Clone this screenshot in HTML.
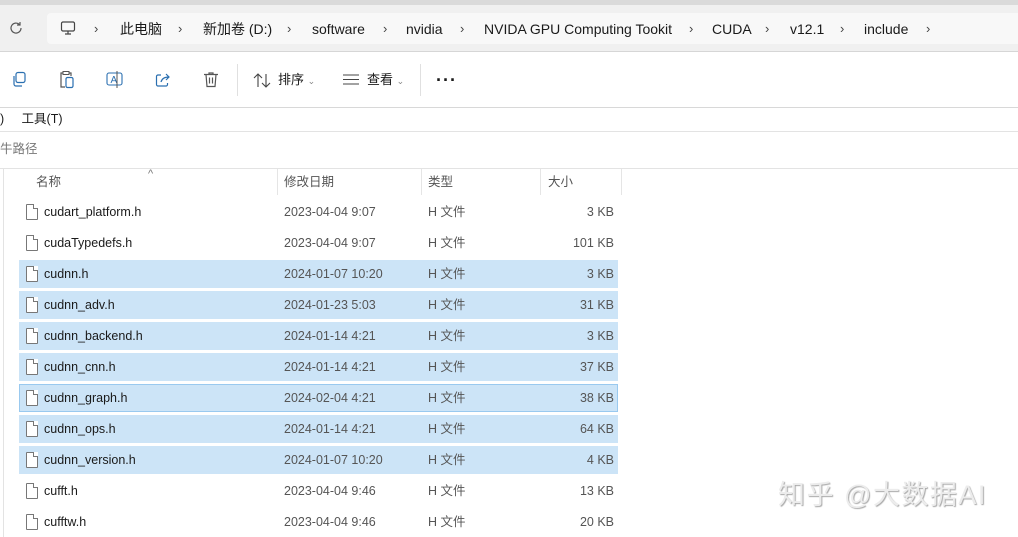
<!DOCTYPE html><html><head><meta charset="utf-8"><style>
*{margin:0;padding:0;box-sizing:border-box}
body{width:1018px;height:537px;overflow:hidden;background:#fff;font-family:"Liberation Sans","Noto Sans CJK SC",sans-serif;color:#1a1a1a;position:relative;font-size:13px;line-height:16px}
.a{position:absolute;white-space:nowrap;line-height:16px}
.top{position:absolute;left:0;top:0;width:1018px;height:52px;background:#f0f0f0;border-bottom:1px solid #d6d6d6}
.strip{position:absolute;left:0;top:0;width:1018px;height:5px;background:#dadada}
.addr{position:absolute;left:47px;top:13px;width:971px;height:31px;background:#f8f8f8;border-radius:4px 0 0 4px}
.bc{position:absolute;top:21px;font-size:14px;color:#1a1a1a;line-height:16px;white-space:nowrap}
.sep{color:#444;font-size:13px}
.line{position:absolute;left:0;width:1018px;height:1px;background:#d8d8d8}
.row{position:absolute;left:19px;width:599px;height:28px}
.sel{background:#cce4f7}
.row span{position:absolute;top:6px;font-size:12.5px;line-height:16px;height:16px;white-space:nowrap}
.fi{position:absolute;left:7px;top:6px;width:12px;height:16px;border:1px solid #777;border-radius:1px;background:#fff}
.fi:after{content:"";position:absolute;right:-1px;top:-1px;width:4px;height:4px;background:#fff;border-left:1px solid #777;border-bottom:1px solid #777}
.g{color:#555}
</style></head><body>
<div class="top"><div class="strip"></div><div class="addr"></div></div>
<svg class="a" style="left:9px;top:21px" width="14" height="14" viewBox="0 0 14 14"><path d="M12 7a5 5 0 1 1-1.5-3.5M11 1v3H8" fill="none" stroke="#555" stroke-width="1.2"/></svg>
<svg class="a" style="left:60px;top:20px" width="16" height="16" viewBox="0 0 16 16"><rect x="1.5" y="2" width="13" height="9" rx="1.5" fill="none" stroke="#444" stroke-width="1.2"/><path d="M5 14h6M8 11v3" stroke="#444" stroke-width="1.2"/></svg>
<div class="bc sep" style="left:94px">›</div>
<div class="bc" style="left:120px">此电脑</div>
<div class="bc sep" style="left:178px">›</div>
<div class="bc" style="left:203px">新加卷 (D:)</div>
<div class="bc sep" style="left:287px">›</div>
<div class="bc" style="left:312px">software</div>
<div class="bc sep" style="left:383px">›</div>
<div class="bc" style="left:406px">nvidia</div>
<div class="bc sep" style="left:460px">›</div>
<div class="bc" style="left:484px">NVIDA GPU Computing Tookit</div>
<div class="bc sep" style="left:689px">›</div>
<div class="bc" style="left:712px">CUDA</div>
<div class="bc sep" style="left:765px">›</div>
<div class="bc" style="left:790px">v12.1</div>
<div class="bc sep" style="left:840px">›</div>
<div class="bc" style="left:864px">include</div>
<div class="bc sep" style="left:926px">›</div>
<!-- toolbar -->
<svg class="a" style="left:11px;top:71px" width="16" height="17" viewBox="0 0 16 17"><rect x="5" y="1.5" width="9" height="10" rx="2" fill="none" stroke="#2a6fb0" stroke-width="1.2"/><path d="M3 5v8a2 2 0 0 0 2 2h6" fill="none" stroke="#2a6fb0" stroke-width="1.2"/></svg>
<svg class="a" style="left:59px;top:70px" width="16" height="19" viewBox="0 0 16 19"><path d="M4 3H2v14h4M10 3h2v3" fill="none" stroke="#555" stroke-width="1.2"/><rect x="4" y="1.5" width="6" height="3" fill="none" stroke="#555"/><rect x="7" y="7.5" width="7" height="10" rx="1.5" fill="none" stroke="#2a6fb0" stroke-width="1.2"/></svg>
<svg class="a" style="left:106px;top:71px" width="18" height="17" viewBox="0 0 18 17"><rect x="1" y="2" width="15" height="12" rx="2" fill="none" stroke="#2a6fb0" stroke-width="1.1"/><text x="4.5" y="12" font-size="10" fill="#2a6fb0" font-family="Liberation Sans">A</text><path d="M11 0v17" stroke="#555"/></svg>
<svg class="a" style="left:155px;top:72px" width="16" height="16" viewBox="0 0 16 16"><path d="M6 3H3a1.5 1.5 0 0 0-1.5 1.5v8A1.5 1.5 0 0 0 3 14h8a1.5 1.5 0 0 0 1.5-1.5V11M6 10c1-4 4-5 8-5M11 2l3 3-3 3" fill="none" stroke="#2a6fb0" stroke-width="1.2"/></svg>
<svg class="a" style="left:203px;top:71px" width="16" height="17" viewBox="0 0 16 17"><path d="M1 3.5h14M6 3.5V2h4v1.5M3 3.5l1 12h8l1-12M6.5 6.5v6M9.5 6.5v6" fill="none" stroke="#555" stroke-width="1.2"/></svg>
<div class="a" style="left:237px;top:64px;width:1px;height:32px;background:#e0e0e0"></div>
<svg class="a" style="left:253px;top:73px" width="18" height="15" viewBox="0 0 18 15"><path d="M5 14V1M1 5l4-4 4 4M13 1v13M9 10l4 4 4-4" fill="none" stroke="#444" stroke-width="1.1"/></svg>
<div class="a" style="left:278px;top:72px;font-size:13px">排序 <span style="font-size:9px;color:#888">⌄</span></div>
<svg class="a" style="left:343px;top:74px" width="16" height="11" viewBox="0 0 16 11"><path d="M0 1h16M0 5.5h16M0 10h16" stroke="#444" stroke-width="1.1"/></svg>
<div class="a" style="left:367px;top:72px;font-size:13px">查看 <span style="font-size:9px;color:#888">⌄</span></div>
<div class="a" style="left:420px;top:64px;width:1px;height:32px;background:#e0e0e0"></div>
<div class="a" style="left:436px;top:72px;font-size:18px;font-weight:bold;letter-spacing:1px;line-height:16px">···</div>
<div class="line" style="top:107px"></div>
<div class="a" style="left:0;top:111px;font-size:12.5px">)&nbsp;&nbsp;&nbsp;&nbsp;&nbsp;工具(T)</div>
<div class="line" style="top:131px;background:#e3e3e3"></div>
<div class="a" style="left:0;top:141px;font-size:12.5px;color:#777">牛路径</div>
<div class="line" style="top:168px;background:#e3e3e3"></div>
<div class="a" style="left:3px;top:169px;width:1px;height:368px;background:#e3e3e3"></div>
<!-- header -->
<div class="a" style="left:148px;top:166px;font-size:11px;color:#777">^</div>
<div class="a g" style="left:36px;top:174px;font-size:12.5px">名称</div>
<div class="a" style="left:277px;top:169px;width:1px;height:26px;background:#e5e5e5"></div>
<div class="a g" style="left:284px;top:174px;font-size:12.5px">修改日期</div>
<div class="a" style="left:421px;top:169px;width:1px;height:26px;background:#e5e5e5"></div>
<div class="a g" style="left:428px;top:174px;font-size:12.5px">类型</div>
<div class="a" style="left:540px;top:169px;width:1px;height:26px;background:#e5e5e5"></div>
<div class="a g" style="left:548px;top:174px;font-size:12.5px">大小</div>
<div class="a" style="left:621px;top:169px;width:1px;height:26px;background:#e5e5e5"></div>

<div class="row" style="top:198px"><div class="fi"></div><span style="left:25px">cudart_platform.h</span><span class="g" style="left:265px">2023-04-04 9:07</span><span class="g" style="left:409px">H 文件</span><span class="g" style="right:4px">3 KB</span></div>
<div class="row" style="top:229px"><div class="fi"></div><span style="left:25px">cudaTypedefs.h</span><span class="g" style="left:265px">2023-04-04 9:07</span><span class="g" style="left:409px">H 文件</span><span class="g" style="right:4px">101 KB</span></div>
<div class="row sel" style="top:260px"><div class="fi"></div><span style="left:25px">cudnn.h</span><span class="g" style="left:265px">2024-01-07 10:20</span><span class="g" style="left:409px">H 文件</span><span class="g" style="right:4px">3 KB</span></div>
<div class="row sel" style="top:291px"><div class="fi"></div><span style="left:25px">cudnn_adv.h</span><span class="g" style="left:265px">2024-01-23 5:03</span><span class="g" style="left:409px">H 文件</span><span class="g" style="right:4px">31 KB</span></div>
<div class="row sel" style="top:322px"><div class="fi"></div><span style="left:25px">cudnn_backend.h</span><span class="g" style="left:265px">2024-01-14 4:21</span><span class="g" style="left:409px">H 文件</span><span class="g" style="right:4px">3 KB</span></div>
<div class="row sel" style="top:353px"><div class="fi"></div><span style="left:25px">cudnn_cnn.h</span><span class="g" style="left:265px">2024-01-14 4:21</span><span class="g" style="left:409px">H 文件</span><span class="g" style="right:4px">37 KB</span></div>
<div class="row sel" style="top:384px;border:1px solid #99c9ef"><div class="fi" style="left:6px;top:5px"></div><span style="left:24px;top:5px">cudnn_graph.h</span><span class="g" style="left:264px;top:5px">2024-02-04 4:21</span><span class="g" style="left:408px;top:5px">H 文件</span><span class="g" style="right:3px;top:5px">38 KB</span></div>
<div class="row sel" style="top:415px"><div class="fi"></div><span style="left:25px">cudnn_ops.h</span><span class="g" style="left:265px">2024-01-14 4:21</span><span class="g" style="left:409px">H 文件</span><span class="g" style="right:4px">64 KB</span></div>
<div class="row sel" style="top:446px"><div class="fi"></div><span style="left:25px">cudnn_version.h</span><span class="g" style="left:265px">2024-01-07 10:20</span><span class="g" style="left:409px">H 文件</span><span class="g" style="right:4px">4 KB</span></div>
<div class="row" style="top:477px"><div class="fi"></div><span style="left:25px">cufft.h</span><span class="g" style="left:265px">2023-04-04 9:46</span><span class="g" style="left:409px">H 文件</span><span class="g" style="right:4px">13 KB</span></div>
<div class="row" style="top:508px"><div class="fi"></div><span style="left:25px">cufftw.h</span><span class="g" style="left:265px">2023-04-04 9:46</span><span class="g" style="left:409px">H 文件</span><span class="g" style="right:4px">20 KB</span></div>

<div class="a" style="left:778px;top:479px;font-size:27px;line-height:32px;color:#ececec;text-shadow:1px 1px 1px #a8a8a8;letter-spacing:1.5px">知乎 @大数据AI</div>
</body></html>
